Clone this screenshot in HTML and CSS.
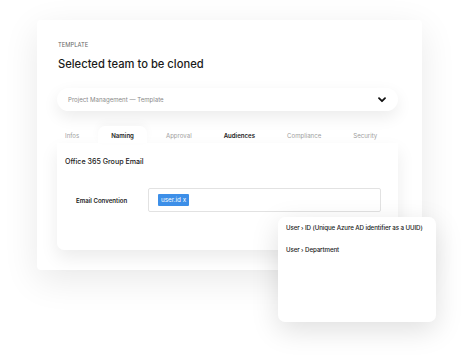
FILE: index.html
```html
<!DOCTYPE html>
<html lang="en">
<head>
  <meta charset="UTF-8" />
  <title>Template cloning</title>
  <link rel="stylesheet" href="styles.css">
</head>
<body>
  <div class="stage">
    <div class="card">
      <p class="eyebrow">TEMPLATE</p>
      <h1 class="title">Selected team to be cloned</h1>

      <div class="select">
        <span>Project Management — Template</span>
        <svg class="chevron" width="8" height="6" viewBox="0 0 8 6">
          <path d="M1 1.2 L4 4.2 L7 1.2" fill="none" stroke="#111" stroke-width="1.8" stroke-linecap="round" stroke-linejoin="round"/>
        </svg>
      </div>

      <div class="tabs">
        <span class="tab">Infos</span>
        <span class="tab active">Naming</span>
        <span class="tab">Approval</span>
        <span class="tab strong">Audiences</span>
        <span class="tab">Compliance</span>
        <span class="tab">Security</span>
      </div>

      <div class="panel">
        <h2 class="panel-title">Office 365 Group Email</h2>
        <div class="field">
          <label class="field-label">Email Convention</label>
          <div class="field-input">
            <span class="chip">user.id x</span>
          </div>
        </div>
      </div>
    </div>

    <div class="popup">
      <div class="popup-item">User › ID (Unique Azure AD identifier as a UUID)</div>
      <div class="popup-item">User › Department</div>
    </div>
  </div>
</body>
</html>
```

FILE: styles.css
```css
* {
  margin: 0;
  padding: 0;
  box-sizing: border-box;
  font-family: 'Inter', 'Liberation Sans', sans-serif;
}

body {
  background: #fff;
  color: #1b1b1b;
}

.stage {
  position: relative;
  width: 474px;
  height: 361px;
  padding: 20px 0 0 37px;
  overflow: hidden;
}

.card {
  width: 385px;
  height: 250px;
  padding: 21px 24px 20px 20px;
  background: #fff;
  border-radius: 4px;
  box-shadow: 0 10px 36px rgba(0, 0, 0, 0.09);
}

.eyebrow {
  font-size: 5.8px;
  line-height: 8px;
  color: #666;
  margin-left: 1px;
}

.title {
  margin-top: 7px;
  font-size: 11.2px;
  line-height: 16px;
  font-weight: 500;
  color: #1a1a1a;
  margin-left: 1px;
}

.select {
  margin-top: 16px;
  height: 23px;
  display: flex;
  align-items: center;
  justify-content: space-between;
  padding: 0 12px 0 11px;
  background: #fff;
  border-radius: 12px;
  box-shadow: 0 6px 16px rgba(0, 0, 0, 0.08);
  font-size: 6.1px;
  color: #8a8a8a;
}

.chevron {
  display: block;
}

.tabs {
  margin-top: 15px;
  height: 17px;
  display: flex;
  gap: 6px;
  padding-left: 8px;
}

.tab {
  display: flex;
  align-items: center;
  padding: 1px 13px 0;
  font-size: 6.1px;
  color: #a0a0a0;
  border-radius: 7px 7px 0 0;
}

.tab:first-child {
  padding-left: 0;
}

.tab.active {
  background: #fff;
  color: #1a1a1a;
  font-weight: 600;
  box-shadow: 0 -3px 8px rgba(0, 0, 0, 0.03);
}

.tab.strong {
  color: #1a1a1a;
  font-weight: 600;
}

.panel {
  height: 107px;
  padding: 14px 17px 0 8px;
  background: #fff;
  border-radius: 0 0 7px 7px;
  box-shadow: 0 8px 18px rgba(0, 0, 0, 0.08);
}

.panel-title {
  font-size: 7.1px;
  line-height: 10px;
  font-weight: 500;
  color: #1a1a1a;
}

.field {
  margin-top: 21px;
  display: flex;
  align-items: center;
}

.field-label {
  width: 83px;
  padding-left: 11px;
  font-size: 6.1px;
  font-weight: 600;
  color: #222;
}

.field-input {
  flex: 1;
  height: 24px;
  display: flex;
  align-items: center;
  padding-left: 9px;
  border: 1px solid #e2e2e2;
  border-radius: 2px;
}

.chip {
  height: 12px;
  display: flex;
  align-items: center;
  padding: 0 3px;
  background: #3d8fe8;
  color: #fff;
  font-size: 6.3px;
  border-radius: 1px;
}

.popup {
  position: absolute;
  left: 278px;
  top: 217px;
  width: 158px;
  height: 105px;
  padding: 6px 0 0 8px;
  background: #fff;
  border-radius: 7px;
  box-shadow: 0 8px 28px rgba(0, 0, 0, 0.13);
}

.popup-item {
  font-size: 6.2px;
  line-height: 10px;
  font-weight: 500;
  color: #1a1a1a;
  margin-bottom: 12px;
  white-space: nowrap;
  letter-spacing: -0.1px;
}
```
